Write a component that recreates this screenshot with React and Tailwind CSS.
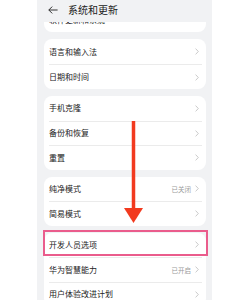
import React from 'react';

const Chevron = () => (
  <svg width="4" height="7" viewBox="0 0 4 7" className="shrink-0">
    <path d="M0.6 0.6 L3.3 3.5 L0.6 6.4" fill="none" stroke="#c4c4c4" strokeWidth="0.9" />
  </svg>
);

const Row = ({ label, value, first, h = 'h-[24.5px]' }) => (
  <div className={`pl-[5px] pr-[4px] ${h}`}>
    <div className={`h-full flex items-center justify-between pr-[3px] ${first ? '' : 'border-t border-[#ebebeb]'}`}>
      <span className="text-[8px] text-[#222] leading-none">{label}</span>
      <div className="flex items-center gap-[4px]">
        {value && <span className="text-[6.5px] text-[#9a9a9a] leading-none">{value}</span>}
        <Chevron />
      </div>
    </div>
  </div>
);

const Card = ({ children }) => (
  <div className="bg-white rounded-[8px] overflow-hidden shrink-0">{children}</div>
);

const App = () => {
  return (
    <div className="relative w-[250px] h-[300px] bg-white overflow-hidden font-['Noto_Sans_CJK_SC','Noto_Sans',sans-serif]">
      <div className="ml-[37px] w-[175px] h-[300px] bg-[#f1f2f4] flex flex-col">
        {/* header */}
        <div className="h-[22px] shrink-0 flex items-center pl-[11px] gap-[10px] pb-[2px]">
          <svg width="10" height="8" viewBox="0 0 10 8">
            <path d="M9.6 4 H0.8 M4.2 0.6 L0.8 4 L4.2 7.4" fill="none" stroke="#333" strokeWidth="1" />
          </svg>
          <span className="text-[10px] text-[#222] leading-none">系统和更新</span>
        </div>

        <div className="flex flex-col gap-[7px] pl-[7px] pr-[6px]">
          {/* scrolled-off card */}
          <div className="bg-white rounded-b-[8px] h-[10px] overflow-hidden flex flex-col justify-end shrink-0">
            <div className="shrink-0 h-[24.5px] pl-[5px] flex items-center">
              <span className="text-[8px] text-[#222] leading-none">软件更新和系统</span>
            </div>
          </div>

          <Card>
            <Row label="语言和输入法" first h="h-[25px]" />
            <Row label="日期和时间" h="h-[25px]" />
          </Card>

          <Card>
            <Row label="手机克隆" first />
            <Row label="备份和恢复" />
            <Row label="重置" />
          </Card>

          <Card>
            <Row label="纯净模式" value="已关闭" first />
            <Row label="简易模式" />
          </Card>

          <Card>
            <Row label="开发人员选项" first />
            <Row label="华为智慧能力" value="已开启" />
            <Row label="用户体验改进计划" />
          </Card>
        </div>
      </div>

      {/* annotation: red arrow */}
      <svg className="absolute left-[120px] top-[119px]" width="30" height="106" viewBox="0 0 30 106">
        <path d="M13.5 2 V90" stroke="#f23a1f" strokeWidth="3.5" />
        <path d="M4 89 H23 L13.5 104 Z" fill="#f23a1f" />
      </svg>

      {/* annotation: pink highlight box */}
      <div className="absolute left-[43px] top-[230px] w-[165px] h-[26px] border-2 border-[#ea5c8c]" />
    </div>
  );
};

export default App;
